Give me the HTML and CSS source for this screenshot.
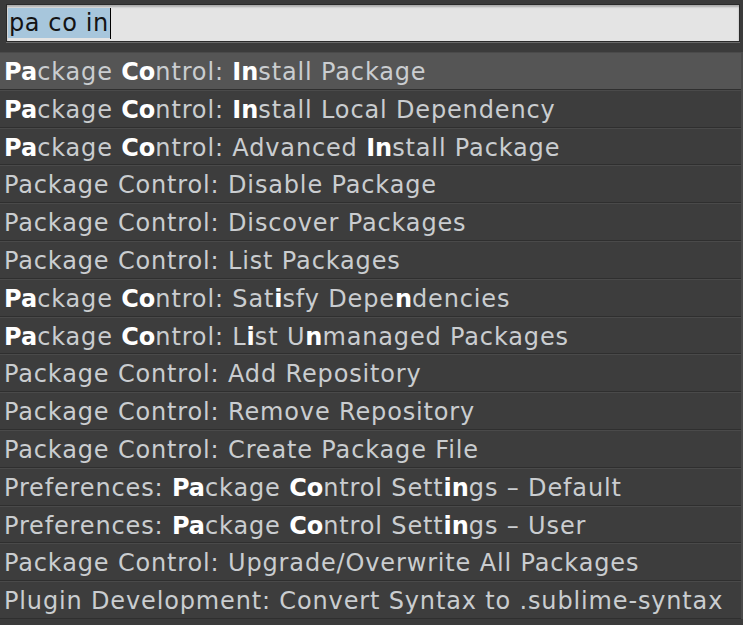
FILE: index.html
```html
<!DOCTYPE html>
<html>
<head>
<meta charset="utf-8">
<link rel="stylesheet" href="styles.css">
</head>
<body>
<div class="palette">
  <div class="search">
    <div class="field"><span class="sel">pa co in</span><span class="caret"></span></div>
  </div>
  <ul class="list">
    <li class="row active"><b>Pa</b>ckage <b>Co</b>ntrol: <b>In</b>stall Package</li>
    <li class="row"><b>Pa</b>ckage <b>Co</b>ntrol: <b>In</b>stall Local Dependency</li>
    <li class="row"><b>Pa</b>ckage <b>Co</b>ntrol: Advanced <b>In</b>stall Package</li>
    <li class="row">Package Control: Disable Package</li>
    <li class="row">Package Control: Discover Packages</li>
    <li class="row">Package Control: List Packages</li>
    <li class="row"><b>Pa</b>ckage <b>Co</b>ntrol: Sat<b>i</b>sfy Depe<b>n</b>dencies</li>
    <li class="row"><b>Pa</b>ckage <b>Co</b>ntrol: L<b>i</b>st U<b>n</b>managed Packages</li>
    <li class="row">Package Control: Add Repository</li>
    <li class="row">Package Control: Remove Repository</li>
    <li class="row">Package Control: Create Package File</li>
    <li class="row">Preferences: <b>Pa</b>ckage <b>Co</b>ntrol Sett<b>in</b>gs – Default</li>
    <li class="row">Preferences: <b>Pa</b>ckage <b>Co</b>ntrol Sett<b>in</b>gs – User</li>
    <li class="row">Package Control: Upgrade/Overwrite All Packages</li>
    <li class="row">Plugin Development: Convert Syntax to .sublime-syntax</li>
  </ul>
</div>
</body>
</html>
```
FILE: styles.css
```css
html, body {
  margin: 0;
  padding: 0;
  background: #3b3b3b;
  overflow: hidden;
}
.palette {
  width: 743px;
  height: 625px;
  background: #3b3b3b;
  font-family: "DejaVu Sans", sans-serif;
}
.search {
  padding: 4px 3px 10px 6px;
}
.field {
  height: 36px;
  background: #e4e4e4;
  border: 1px solid #2a2a2a;
  box-shadow: inset 0 2px 2px rgba(0,0,0,0.25), 0 1px 0 #6a6a6a;
  display: flex;
  align-items: center;
  padding-left: 1px;
}
.sel {
  background: #a7c6dc;
  color: #141414;
  font-size: 24px;
  letter-spacing: 0.6px;
  line-height: 30px;
  padding: 0 1px;
}
.caret {
  width: 1px;
  height: 31px;
  background: #000;
}
.list {
  list-style: none;
  margin: 0;
  padding: 0;
  width: 741px;
  border-right: 2px solid #4a4a4a;
}
.row {
  height: 35.8px;
  line-height: 38px;
  padding-left: 4px;
  font-size: 24px;
  letter-spacing: 0.85px;
  color: #cacdd0;
  white-space: nowrap;
  overflow: hidden;
  background: #3d3d3d;
  border-bottom: 1px solid #2f2f2f;
  border-top: 1px solid #4a4a4a;
}
.row.active {
  background: #555555;
}
.row b {
  color: #ffffff;
  font-weight: bold;
  letter-spacing: 0;
}
```
